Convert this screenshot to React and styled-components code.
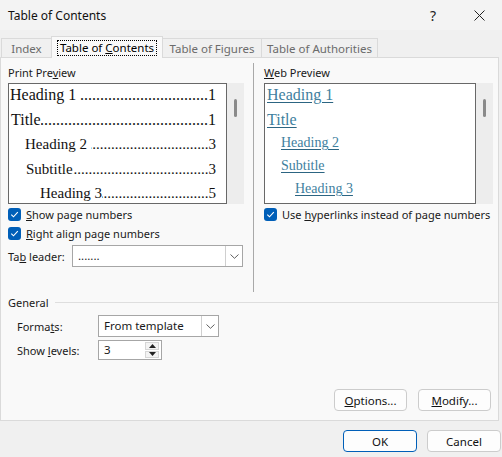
import React from 'react';
import styled, { createGlobalStyle } from 'styled-components';

const GlobalStyle = createGlobalStyle`
  html, body {
    margin: 0;
    padding: 0;
    background: #f0f0f0;
  }
  body {
    font-family: "Noto Sans", "Liberation Sans", sans-serif;
    font-size: 11px;
    color: #1a1a1a;
  }
  u {
    text-underline-offset: 1px;
  }
`;

const Window = styled.div`
  width: 502px;
  height: 457px;
  overflow: hidden;
  background: #f0f0f0;
  display: flex;
  flex-direction: column;
`;

const TitleBar = styled.div`
  height: 30px;
  flex: none;
  display: flex;
  align-items: center;
  padding-left: 8px;
  background: #f3f3f3;
  font-size: 12px;
  color: #111;
`;

const TitleText = styled.div`
  flex: 1;
  min-width: 0;
`;

const TitleButton = styled.div`
  flex: none;
  width: 46px;
  height: 30px;
  display: flex;
  align-items: center;
  justify-content: center;
  font-size: 14px;
  color: #222;
`;

const TabStrip = styled.div`
  height: 27px;
  flex: none;
  display: flex;
  align-items: flex-end;
  padding-left: 2px;
  position: relative;
  z-index: 1;
`;

const Tab = styled.div`
  box-sizing: border-box;
  width: ${p => p.$w}px;
  height: ${p => (p.$active ? 22 : 19)}px;
  margin-bottom: ${p => (p.$active ? -1 : 0)}px;
  border: 1px solid #dadada;
  border-bottom: none;
  margin-left: -1px;
  background: ${p => (p.$active ? '#f9f9f9' : '#f0f0f0')};
  color: ${p => (p.$active ? '#000' : '#6b6b6b')};
  display: flex;
  align-items: center;
  justify-content: center;
  font-size: 11.5px;
`;

const FocusRing = styled.span`
  border: 1px dotted #000;
  padding: 0 2px;
  line-height: 14px;
`;

const Panel = styled.div`
  box-sizing: border-box;
  height: 364px;
  flex: none;
  margin-right: 3px;
  border: 1px solid #dadada;
  background: #f9f9f9;
  display: flex;
  flex-direction: column;
`;

const Columns = styled.div`
  height: 234px;
  flex: none;
  display: flex;
`;

const LeftCol = styled.div`
  box-sizing: border-box;
  width: 252px;
  padding: 7px 0 0 7px;
`;

const RightCol = styled.div`
  box-sizing: border-box;
  flex: 1;
  margin-top: 5px;
  border-left: 1px solid #a9a9a9;
  padding: 2px 0 0 10px;
`;

const Label = styled.div`
  height: 16px;
  line-height: 16px;
  margin-bottom: 2px;
`;

const PreviewRow = styled.div`
  display: flex;
  height: 121px;
`;

const PreviewBox = styled.div`
  box-sizing: border-box;
  width: ${p => p.$w}px;
  height: 121px;
  border: 1px solid #686868;
  background: #fff;
  overflow: hidden;
  padding: 0 10px 0 1px;
  font-family: "Liberation Serif", "Times New Roman", serif;
  color: #111;
`;

const PreviewLines = styled.div`
  margin-top: ${p => p.$offset}px;
`;

const ScrollTrack = styled.div`
  width: 17px;
  height: 121px;
  background: #ededed;
  display: flex;
  justify-content: center;
`;

const ScrollThumb = styled.div`
  width: 3px;
  height: 18px;
  margin-top: 16px;
  background: #8a8a8a;
  border-radius: 1.5px;
`;

const PrintLine = styled.div`
  display: flex;
  align-items: baseline;
  height: 24.5px;
  line-height: 24.5px;
  padding-left: ${p => p.$indent}px;
  font-size: ${p => p.$size}px;
  white-space: nowrap;
`;

const EntryText = styled.span`
  flex: none;
  padding-right: ${p => (p.$gap ? 4 : 0)}px;
`;

// dotted tab leader, drawn as decoration so it fills whatever space is left
const Leader = styled.span`
  flex: 1;
  min-width: 0;
  overflow: hidden;
  white-space: nowrap;
  direction: rtl;
  &::before {
    content: '................................................................................';
  }
`;

const WebLine = styled.div`
  height: ${p => p.$h}px;
  line-height: ${p => p.$h}px;
  padding-left: ${p => p.$indent}px;
  font-size: ${p => p.$size}px;
  white-space: nowrap;
`;

const WebLink = styled.span`
  color: #40809e;
  text-decoration: underline;
  text-decoration-color: #2c6582;
  text-underline-offset: 2px;
`;

const CheckRow = styled.div`
  height: 19px;
  display: flex;
  align-items: center;
  gap: 5px;
  margin-top: ${p => p.$top || 0}px;
`;

const CheckBox = styled.span`
  width: 13px;
  height: 13px;
  border-radius: 3px;
  background: #005fb8;
  display: flex;
  align-items: center;
  justify-content: center;
  flex: none;
`;

const FieldRow = styled.div`
  display: flex;
  align-items: center;
  height: ${p => p.$h}px;
  margin-top: ${p => p.$top}px;
  padding-left: ${p => p.$indent}px;
`;

const FieldLabel = styled.div`
  width: ${p => p.$w}px;
  flex: none;
`;

const Select = styled.div`
  box-sizing: border-box;
  width: ${p => p.$w}px;
  height: 22px;
  border: 1px solid #a6a6a6;
  background: #fff;
  display: flex;
`;

const SelectValue = styled.div`
  flex: 1;
  padding-left: 5px;
  line-height: 20px;
  font-size: 11.5px;
`;

const SelectArrow = styled.div`
  width: 16px;
  border-left: 1px solid #cfcfcf;
  display: flex;
  align-items: center;
  justify-content: center;
`;

const Spin = styled.div`
  box-sizing: border-box;
  width: 64px;
  height: 20px;
  border: 1px solid #a6a6a6;
  background: #fff;
  display: flex;
`;

const SpinValue = styled.div`
  flex: 1;
  padding-left: 5px;
  line-height: 18px;
  font-size: 11.5px;
`;

const SpinButtons = styled.div`
  width: 14px;
  margin: 1px 2px 1px 0;
  display: flex;
  flex-direction: column;
  gap: 1px;
`;

const SpinButton = styled.div`
  flex: 1;
  background: #f3f3f3;
  border: 1px solid #d6d6d6;
  display: flex;
  align-items: center;
  justify-content: center;
`;

const GroupHeader = styled.div`
  height: 20px;
  padding-left: 7px;
  display: flex;
  align-items: center;
`;

const GroupLine = styled.div`
  flex: 1;
  height: 1px;
  margin-left: 6px;
  background: #dedede;
`;

const ActionRow = styled.div`
  margin-top: auto;
  display: flex;
  justify-content: flex-end;
  gap: 11px;
  padding: 0 7px 9px 0;
`;

const Button = styled.div`
  box-sizing: border-box;
  width: ${p => p.$w}px;
  height: 22px;
  border: 1px solid ${p => (p.$primary ? '#005fb8' : '#cccccc')};
  border-radius: 4px;
  background: #fdfdfd;
  display: flex;
  align-items: center;
  justify-content: center;
  font-size: 11.5px;
  color: #111;
`;

const Footer = styled.div`
  flex: 1;
  display: flex;
  justify-content: flex-end;
  align-items: flex-start;
  gap: 10px;
  padding: 9px 1px 0 0;
`;

const Check = () => (
  <CheckBox>
    <svg width="9" height="9" viewBox="0 0 9 9">
      <path d="M1.3 4.7 L3.5 6.8 L7.8 2.2" fill="none" stroke="#fff" strokeWidth="1.1" />
    </svg>
  </CheckBox>
);

const Chevron = () => (
  <svg width="9" height="5" viewBox="0 0 9 5">
    <path d="M0.5 0.5 L4.5 4.3 L8.5 0.5" fill="none" stroke="#606060" strokeWidth="1" />
  </svg>
);

const Tri = ({ up }) => (
  <svg width="7" height="4" viewBox="0 0 7 4">
    <path d={up ? 'M0 4 L3.5 0 L7 4 Z' : 'M0 0 L3.5 4 L7 0 Z'} fill="#222" />
  </svg>
);

const printEntries = [
  { text: 'Heading 1', gap: true, page: 1, indent: 0, size: 16 },
  { text: 'Title', page: 1, indent: 1, size: 16 },
  { text: 'Heading 2', gap: true, page: 3, indent: 15, size: 15 },
  { text: 'Subtitle', page: 3, indent: 16, size: 15 },
  { text: 'Heading 3', page: 5, indent: 30, size: 15 },
];

const webEntries = [
  { text: 'Heading 1', indent: 1, size: 16, h: 26 },
  { text: 'Title', indent: 1, size: 16, h: 23 },
  { text: 'Heading 2', indent: 15, size: 14, h: 23 },
  { text: 'Subtitle', indent: 15, size: 14, h: 23 },
  { text: 'Heading 3', indent: 29, size: 14, h: 23 },
];

const tabs = [
  { label: 'Index', w: 51 },
  { label: 'Table of Contents', w: 112, active: true },
  { label: 'Table of Figures', w: 100 },
  { label: 'Table of Authorities', w: 117 },
];

export default function App() {
  return (
    <Window>
      <GlobalStyle />
      <TitleBar>
        <TitleText>Table of Contents</TitleText>
        <TitleButton>?</TitleButton>
        <TitleButton>
          <svg width="11" height="11" viewBox="0 0 11 11">
            <path d="M0.5 0.5 L10.5 10.5 M10.5 0.5 L0.5 10.5" stroke="#222" strokeWidth="1" />
          </svg>
        </TitleButton>
      </TitleBar>

      <TabStrip>
        {tabs.map(t => (
          <Tab key={t.label} $w={t.w} $active={t.active}>
            {t.active ? (
              <FocusRing>
                Table of <u>C</u>ontents
              </FocusRing>
            ) : (
              t.label
            )}
          </Tab>
        ))}
      </TabStrip>

      <Panel>
        <Columns>
          <LeftCol>
            <Label>
              Print Pre<u>v</u>iew
            </Label>
            <PreviewRow>
              <PreviewBox $w={219}>
                <PreviewLines $offset={-1}>
                  {printEntries.map(e => (
                    <PrintLine key={e.text} $indent={e.indent} $size={e.size}>
                      <EntryText $gap={e.gap}>{e.text}</EntryText>
                      <Leader />
                      <span>{e.page}</span>
                    </PrintLine>
                  ))}
                </PreviewLines>
              </PreviewBox>
              <ScrollTrack>
                <ScrollThumb />
              </ScrollTrack>
            </PreviewRow>
            <CheckRow $top={1}>
              <Check />
              <span>
                <u>S</u>how page numbers
              </span>
            </CheckRow>
            <CheckRow>
              <Check />
              <span>
                <u>R</u>ight align page numbers
              </span>
            </CheckRow>
            <FieldRow $h={22} $top={2} $indent={0}>
              <FieldLabel $w={64}>
                Ta<u>b</u> leader:
              </FieldLabel>
              <Select $w={171}>
                <SelectValue>.......</SelectValue>
                <SelectArrow>
                  <Chevron />
                </SelectArrow>
              </Select>
            </FieldRow>
          </LeftCol>

          <RightCol>
            <Label>
              <u>W</u>eb Preview
            </Label>
            <PreviewRow>
              <PreviewBox $w={212}>
                <PreviewLines $offset={-2}>
                  {webEntries.map(e => (
                    <WebLine key={e.text} $indent={e.indent} $size={e.size} $h={e.h}>
                      <WebLink>{e.text}</WebLink>
                    </WebLine>
                  ))}
                </PreviewLines>
              </PreviewBox>
              <ScrollTrack>
                <ScrollThumb />
              </ScrollTrack>
            </PreviewRow>
            <CheckRow $top={1}>
              <Check />
              <span>
                Use <u>h</u>yperlinks instead of page numbers
              </span>
            </CheckRow>
          </RightCol>
        </Columns>

        <GroupHeader>
          <span>General</span>
          <GroupLine />
        </GroupHeader>
        <FieldRow $h={22} $top={3} $indent={16}>
          <FieldLabel $w={81}>
            Forma<u>t</u>s:
          </FieldLabel>
          <Select $w={121}>
            <SelectValue>From template</SelectValue>
            <SelectArrow>
              <Chevron />
            </SelectArrow>
          </Select>
        </FieldRow>
        <FieldRow $h={20} $top={3} $indent={16}>
          <FieldLabel $w={81}>
            Show <u>l</u>evels:
          </FieldLabel>
          <Spin>
            <SpinValue>3</SpinValue>
            <SpinButtons>
              <SpinButton>
                <Tri up />
              </SpinButton>
              <SpinButton>
                <Tri />
              </SpinButton>
            </SpinButtons>
          </Spin>
        </FieldRow>

        <ActionRow>
          <Button $w={73}>
            <span>
              <u>O</u>ptions...
            </span>
          </Button>
          <Button $w={73}>
            <span>
              <u>M</u>odify...
            </span>
          </Button>
        </ActionRow>
      </Panel>

      <Footer>
        <Button $w={74} $primary>
          OK
        </Button>
        <Button $w={74}>Cancel</Button>
      </Footer>
    </Window>
  );
}
